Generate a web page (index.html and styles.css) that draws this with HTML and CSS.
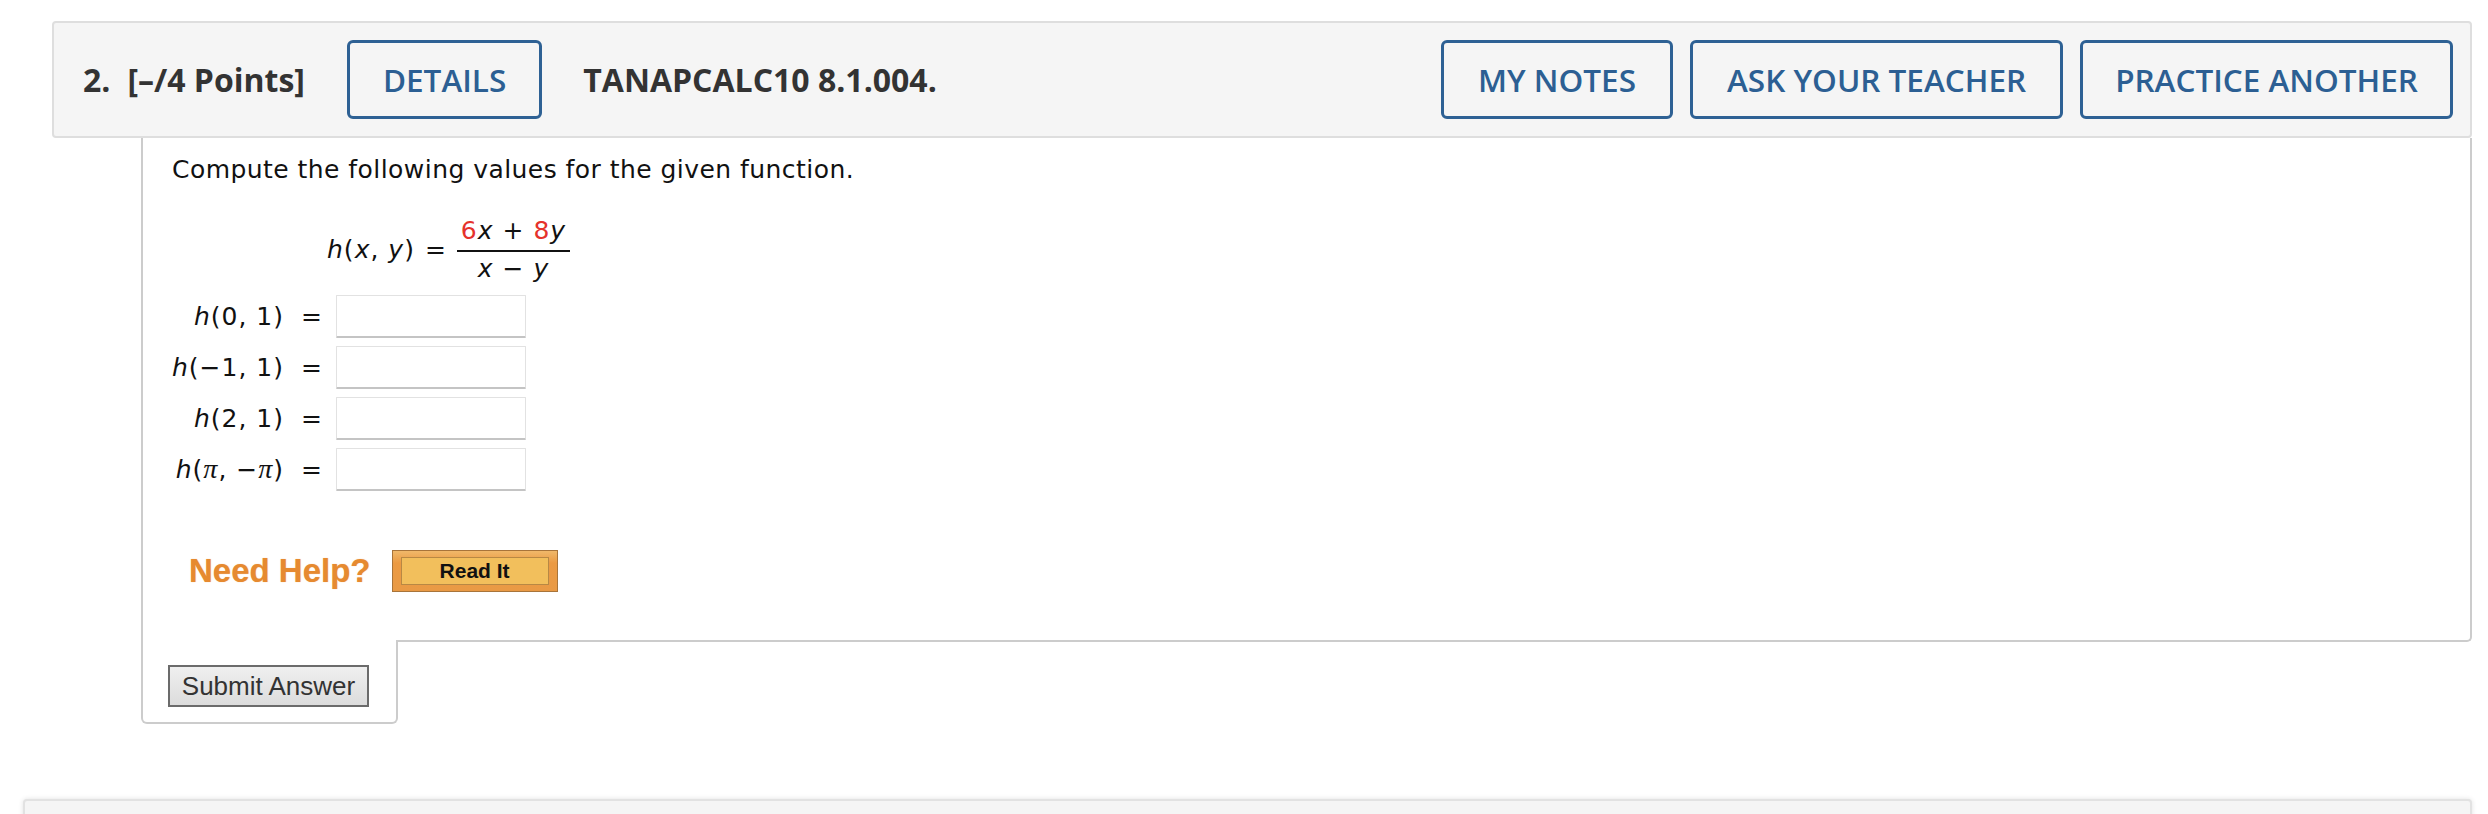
FILE: index.html
```html
<!DOCTYPE html>
<html lang="en">
<head>
<meta charset="utf-8">
<title>Question 2</title>
<link rel="stylesheet" href="styles.css">
</head>
<body>
<div class="page">
  <div class="question">
    <div class="qhead">
      <span class="qnum">2.</span>
      <span class="qpts">[–/4 Points]</span>
      <button class="hbtn details">DETAILS</button>
      <span class="qcode">TANAPCALC10 8.1.004.</span>
      <span class="spacer"></span>
      <button class="hbtn">MY NOTES</button>
      <button class="hbtn">ASK YOUR TEACHER</button>
      <button class="hbtn practice">PRACTICE ANOTHER</button>
    </div>
    <div class="qbody">
      <p class="prompt">Compute the following values for the given function.</p>
      <div class="formula">
        <span class="lhs"><i>h</i>(<i>x</i>, <i>y</i>)</span>
        <span class="eqsign">=</span>
        <span class="frac">
          <span class="num"><span class="red">6</span><i>x</i> + <span class="red">8</span><i>y</i></span>
          <span class="den"><i>x</i> − <i>y</i></span>
        </span>
      </div>
      <div class="answers">
        <span class="lbl"><i>h</i>(0, 1)</span><span class="eq">=</span><input class="ans" type="text">
        <span class="lbl"><i>h</i>(−1, 1)</span><span class="eq">=</span><input class="ans" type="text">
        <span class="lbl"><i>h</i>(2, 1)</span><span class="eq">=</span><input class="ans" type="text">
        <span class="lbl"><i>h</i>(<i class="pi">π</i>, −<i class="pi">π</i>)</span><span class="eq">=</span><input class="ans" type="text">
      </div>
      <div class="help">
        <span class="needhelp">Need Help?</span>
        <span class="readit"><span class="readit-in">Read It</span></span>
      </div>
    </div>
    <div class="submit-tab">
      <button class="submit">Submit Answer</button>
    </div>
  </div>
  <div class="nextq"></div>
</div>
</body>
</html>
```

FILE: styles.css
```css
html, body {
  margin: 0;
  padding: 0;
  background: #ffffff;
}
.page {
  padding: 21px 16px 0 23px;
}
.question {
  margin-left: 29px;
}
.qhead {
  display: flex;
  align-items: center;
  height: 113px;
  padding: 0 17px 0 29px;
  background: #f5f5f5;
  border: 2px solid #dedede;
  border-radius: 4px;
  font-family: "Open Sans", "Liberation Sans", sans-serif;
  color: #333333;
  position: relative;
  z-index: 1;
}
.qnum {
  font-size: 32px;
  font-weight: 700;
  margin-right: 17px;
}
.qpts {
  font-size: 32px;
  font-weight: 700;
  margin-right: 42px;
}
.qcode {
  font-size: 32px;
  font-weight: 700;
  margin-left: 41px;
}
.spacer {
  flex: 1;
}
.hbtn {
  height: 79px;
  padding: 0 34px;
  border: 3px solid #2e6194;
  border-radius: 6px;
  background: #f5f5f5;
  color: #2c5f93;
  font-family: "Open Sans", "Liberation Sans", sans-serif;
  font-size: 31.5px;
  font-weight: 600;
  margin-left: 17px;
}
.hbtn.details {
  margin-left: 0;
  padding: 0 33px;
}
.hbtn.practice {
  padding: 0 32px;
}
.qbody {
  margin-left: 89px;
  border: 2px solid #cccccc;
  border-top: none;
  border-bottom-right-radius: 5px;
  padding: 17px 0 48px 29px;
  font-family: "DejaVu Sans", Verdana, sans-serif;
  color: #111111;
}
.prompt {
  margin: 0;
  font-size: 25px;
  letter-spacing: 0.45px;
  line-height: 30px;
}
.formula {
  display: flex;
  align-items: center;
  margin: 32px 0 0 155px;
  font-size: 25px;
  letter-spacing: 1px;
}
.lhs {
  line-height: 28px;
}
.eqsign {
  margin: 0 10px 0 10px;
  line-height: 28px;
}
.frac {
  display: inline-flex;
  flex-direction: column;
  align-items: center;
}
.num {
  line-height: 28px;
  padding: 0 4px 5px;
  border-bottom: 2px solid #111111;
}
.den {
  line-height: 28px;
  padding-top: 3px;
}
.red {
  color: #e5322b;
}
.pi {
  font-family: "Liberation Serif", "DejaVu Serif", serif;
  font-size: 28px;
}
.answers {
  display: grid;
  grid-template-columns: auto 52px 190px;
  justify-content: start;
  row-gap: 8px;
  align-items: center;
  margin-top: 12px;
  font-size: 25px;
  letter-spacing: 1px;
}
.lbl {
  text-align: right;
  white-space: nowrap;
  line-height: 28px;
}
.eq {
  padding-left: 17px;
  line-height: 28px;
}
.ans {
  box-sizing: border-box;
  width: 190px;
  height: 43px;
  margin: 0;
  border: 1px solid #e2e2e2;
  border-bottom: 2px solid #c4c4c4;
  border-radius: 1px;
  background: #ffffff;
}
.help {
  display: flex;
  align-items: center;
  margin: 59px 0 0 17px;
}
.needhelp {
  font-family: "Liberation Sans", Arial, sans-serif;
  font-weight: 700;
  font-size: 33px;
  line-height: 42px;
  color: #e68a30;
  text-shadow: 0 0 1px rgba(230, 138, 48, 0.6);
  margin-right: 21px;
}
.readit {
  box-sizing: border-box;
  display: flex;
  width: 166px;
  height: 42px;
  padding: 6px 8px 6px 8px;
  background: linear-gradient(#f0b86a, #eb9a43 30%, #e99a45);
  border: 1px solid #a8743a;
}
.readit-in {
  flex: 1;
  display: flex;
  align-items: center;
  justify-content: center;
  background: #f2bf5c;
  border: 1px solid #b88844;
  font-family: "Liberation Sans", Arial, sans-serif;
  font-weight: 700;
  font-size: 21px;
  color: #111111;
}
.submit-tab {
  box-sizing: border-box;
  width: 257px;
  margin: -2px 0 0 89px;
  padding: 25px 0 15px 25px;
  background: #ffffff;
  border: 2px solid #cccccc;
  border-top: none;
  border-radius: 0 0 6px 6px;
}
.submit {
  box-sizing: border-box;
  display: block;
  width: 201px;
  height: 42px;
  padding: 0;
  border: 2px solid #6b6b6b;
  background: linear-gradient(#efefef, #dcdcdc);
  font-family: "Liberation Sans", Arial, sans-serif;
  font-size: 26px;
  color: #333333;
}
.nextq {
  margin-top: 75px;
  height: 40px;
  background: #f5f5f5;
  border: 2px solid #e2e2e2;
  border-radius: 4px;
  box-shadow: 0 0 5px rgba(0, 0, 0, 0.12);
}
```
